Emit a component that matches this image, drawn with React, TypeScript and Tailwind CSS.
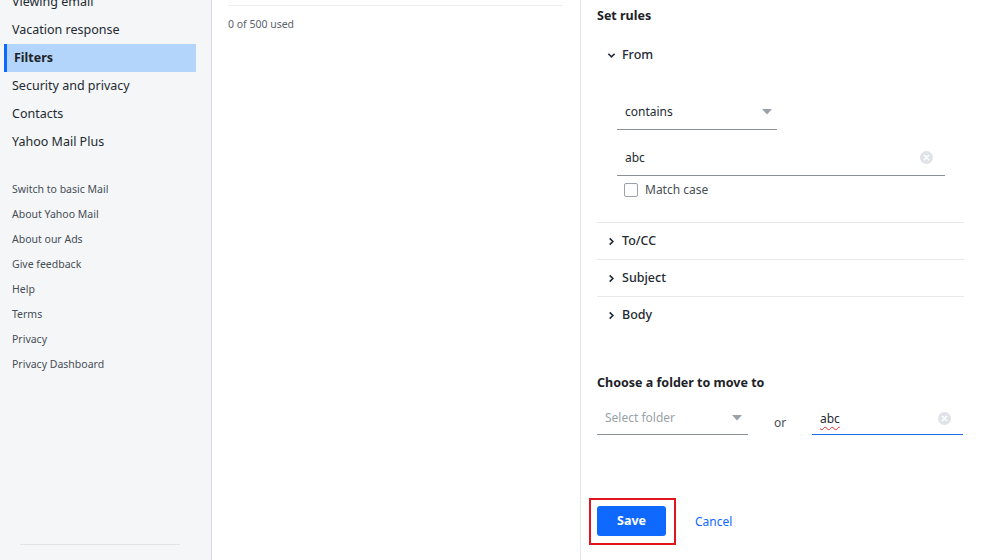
import React from 'react';

const font = { fontFamily: '"Noto Sans", "Open Sans", Arial, sans-serif' };

function Caret() {
  return (
    <svg width="10" height="6" viewBox="0 0 10 6" className="shrink-0">
      <path d="M0 0 L10 0 L5 5.5 Z" fill="#9aa1a8" />
    </svg>
  );
}

function ClearIcon() {
  return (
    <svg width="13" height="13" viewBox="0 0 14 14" className="shrink-0">
      <circle cx="7" cy="7" r="7" fill="#dfe2e6" />
      <path d="M4.6 4.6 L9.4 9.4 M9.4 4.6 L4.6 9.4" stroke="#fff" strokeWidth="1.6" strokeLinecap="round" />
    </svg>
  );
}

function Chevron({ open }: { open?: boolean }) {
  return (
    <svg width="9" height="9" viewBox="0 0 10 10" className="shrink-0">
      {open ? (
        <path d="M1.5 3 L5 6.5 L8.5 3" fill="none" stroke="#232a31" strokeWidth="1.8" />
      ) : (
        <path d="M3 1.5 L6.5 5 L3 8.5" fill="none" stroke="#232a31" strokeWidth="1.8" />
      )}
    </svg>
  );
}

const mainItems = ['Vacation response', 'Filters', 'Security and privacy', 'Contacts', 'Yahoo Mail Plus'];
const footerLinks = [
  'Switch to basic Mail',
  'About Yahoo Mail',
  'About our Ads',
  'Give feedback',
  'Help',
  'Terms',
  'Privacy',
  'Privacy Dashboard',
];

function Sidebar() {
  return (
    <aside className="w-[212px] h-full shrink-0 bg-[#f5f6f8] border-r border-[#d8dadd] flex flex-col">
      <div className="h-[28px] -mt-[12px] pl-[12px] text-[12.5px] leading-[28px] text-[#232a31]">Viewing email</div>
      {mainItems.map((item) =>
        item === 'Filters' ? (
          <div
            key={item}
            className="ml-[4px] w-[192px] h-[28px] bg-[#b3d5fb] border-l-[3px] border-[#0f69ff] pl-[7px] text-[12.5px] leading-[28px] font-bold text-[#1d2228]"
          >
            {item}
          </div>
        ) : (
          <div key={item} className="h-[28px] pl-[12px] text-[12.5px] leading-[28px] text-[#232a31]">
            {item}
          </div>
        )
      )}
      <div className="mt-[21px]">
        {footerLinks.map((l) => (
          <div key={l} className="h-[25px] pl-[12px] text-[10.5px] leading-[25px] text-[#464e56]">
            {l}
          </div>
        ))}
      </div>
      <div className="mt-auto mb-[15px] mx-[20px] w-[160px] border-t border-[#e0e2e5]" />
    </aside>
  );
}

function Middle() {
  return (
    <section className="w-[369px] h-full shrink-0 bg-white border-r border-[#e6e8ea] pt-[5px] px-[16px]">
      <div className="border-t border-[#eceef0] w-[335px]" />
      <div className="mt-[11px] text-[10.5px] text-[#5b636a]">0 of 500 used</div>
    </section>
  );
}

function RuleRow({ label }: { label: string }) {
  return (
    <div className="border-t border-[#e6e8ea] h-[37px] flex items-center gap-[6px] pl-[10px] text-[12.5px] text-[#232a31] font-medium">
      <Chevron />
      <span>{label}</span>
    </div>
  );
}

function RightPanel() {
  return (
    <section className="flex-1 h-full bg-white pl-[16px] pr-[36px] pt-[6px]">
      <div className="text-[12.5px] font-bold text-[#1d2228] leading-[20px]">Set rules</div>
      <div className="mt-[19px] flex items-center gap-[6px] pl-[10px] text-[12.5px] font-medium text-[#232a31] leading-[20px]">
        <Chevron open />
        <span>From</span>
      </div>
      <div className="pl-[20px]">
        <div className="mt-[35px] w-[160px] h-[30px] border-b border-[#8a9197] flex items-center justify-between pl-[8px] pr-[5px] pb-[6px]">
          <span className="text-[12px] text-[#232a31]">contains</span>
          <Caret />
        </div>
        <div className="mt-[16px] w-[328px] h-[30px] border-b border-[#8a9197] flex items-center justify-between pl-[8px] pr-[12px] pb-[6px]">
          <span className="text-[12px] text-[#232a31]">abc</span>
          <ClearIcon />
        </div>
        <div className="mt-[5px] flex items-center gap-[7px] pl-[7px]">
          <span className="w-[14px] h-[14px] border border-[#9aa1a8] rounded-[2px] bg-white" />
          <span className="text-[12px] text-[#464e56]">Match case</span>
        </div>
      </div>
      <div className="mt-[23px]">
        <RuleRow label="To/CC" />
        <RuleRow label="Subject" />
        <RuleRow label="Body" />
      </div>
      <div className="mt-[40px] text-[12.5px] font-bold text-[#1d2228] leading-[20px]">Choose a folder to move to</div>
      <div className="mt-[13px] flex items-end">
        <div className="w-[151px] h-[29px] border-b border-[#8a9197] flex items-center justify-between pl-[8px] pr-[6px] pb-[4px]">
          <span className="text-[12px] text-[#9aa1a8]">Select folder</span>
          <Caret />
        </div>
        <div className="w-[64px] text-center text-[12px] text-[#464e56] pb-[3px]">or</div>
        <div className="w-[151px] h-[28px] border-b-[1.5px] border-[#1a6ee6] flex items-center justify-between pl-[8px] pr-[12px] pb-[4px]">
          <span className="text-[12px] text-[#232a31] underline decoration-wavy decoration-[#e0292b] decoration-1 underline-offset-[3px]">abc</span>
          <ClearIcon />
        </div>
      </div>
      <div className="mt-[63px] flex items-center">
        <div className="border-2 border-[#e0151e] pt-[6px] pb-[7px] pl-[6px] pr-[8px] -ml-[8px]">
          <button className="w-[69px] h-[30px] rounded-[3px] bg-[#0f69ff] text-white text-[12.5px] font-bold">Save</button>
        </div>
        <button className="ml-[19px] text-[12px] text-[#0f69ff]">Cancel</button>
      </div>
    </section>
  );
}

export default function App() {
  return (
    <div className="w-[1000px] h-[560px] overflow-hidden flex bg-white" style={font}>
      <Sidebar />
      <Middle />
      <RightPanel />
    </div>
  );
}
